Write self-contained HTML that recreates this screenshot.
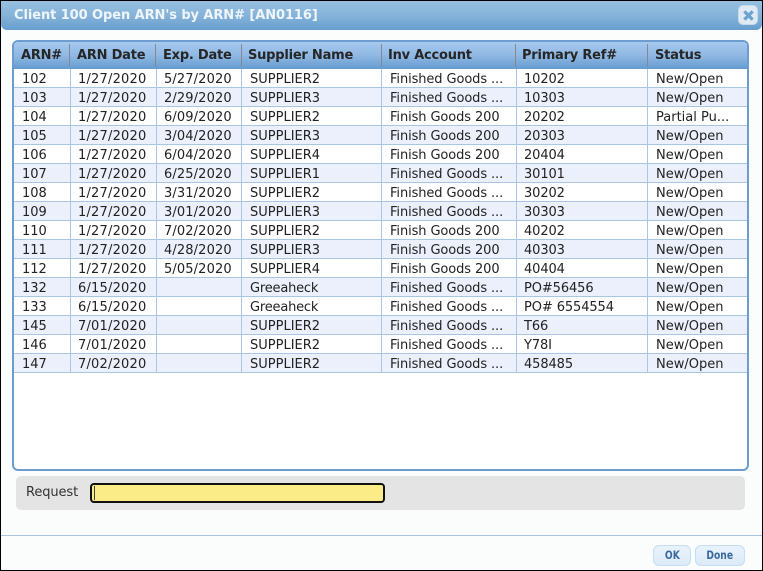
<!DOCTYPE html>
<html><head><meta charset="utf-8"><style>
html,body{margin:0;padding:0;width:763px;height:571px;overflow:hidden;background:#fbfdfd;font-family:"DejaVu Sans",sans-serif}
#w{position:absolute;left:0;top:0;width:763px;height:571px;overflow:hidden}
#bl{position:absolute;left:0;top:0;width:1px;height:571px;background:#000}
#bb{position:absolute;left:0;top:570px;width:763px;height:1px;background:#000}
#bt{position:absolute;left:0;top:0;width:763px;height:1px;background:#000}
#br{position:absolute;left:762px;top:0;width:1px;height:571px;background:#000}
#tb{position:absolute;left:1px;top:1px;width:761px;height:29px;background:linear-gradient(#96c0e0,#85b3d9 50%,#679ecd);border-radius:0 0 6px 6px}
#tt{position:absolute;left:14px;top:8px;color:#eef5fb;font-weight:bold;font-size:13px;letter-spacing:-.08px;line-height:16px;white-space:nowrap}
#x{position:absolute;left:738px;top:5px;width:20px;height:20px;border-radius:5px;background:#dfeaf5;border:1px solid #c4daec;box-sizing:border-box}
#g{position:absolute;left:12px;top:40px;width:737px;height:431px;box-sizing:border-box;border:2px solid #6b9dd0;border-radius:6px;background:#fff;overflow:hidden}
#h{position:absolute;left:0;top:0;width:733px;height:27px;background:linear-gradient(#a6c9ee,#8fb8e3 50%,#659bd0)}
.hc{position:absolute;top:6px;font-weight:bold;font-size:13px;letter-spacing:-.22px;line-height:16px;color:#262626;white-space:nowrap}
.hs{position:absolute;top:2px;width:1px;height:23px;background:#86888f}
.r{position:absolute;left:0;width:733px;height:19px;box-sizing:border-box;border-bottom:1px solid #a9c7e5;font-size:13px;line-height:18px;color:#222}
.r.a{background:#ebf0fc}
.r span{position:absolute;top:2px;white-space:nowrap}
.r span:nth-child(2){letter-spacing:.2px}
.r span:nth-child(3):not(.n){letter-spacing:.12px}
.r span.g{letter-spacing:-.2px}
.r span:nth-last-child(3){letter-spacing:-.1px}
.r span:nth-last-child(2){letter-spacing:-.1px}
.v{position:absolute;top:27px;width:1px;height:304px;background:#a9c7e5}
#rq{position:absolute;left:16px;top:476px;width:729px;height:34px;background:#e4e4e4;border-radius:5px}
#rl{position:absolute;left:26px;top:485px;font-size:13px;letter-spacing:-.1px;line-height:16px;color:#333}
#in{position:absolute;left:90px;top:483px;width:295px;height:20px;box-sizing:border-box;border:2px solid #111;border-radius:4px;background:#fbec88}
#car{position:absolute;left:94px;top:486px;width:1px;height:14px;background:#444}
#ln{position:absolute;left:1px;top:535px;width:761px;height:1px;background:#a9c5de}
.b{position:absolute;top:545px;height:21px;box-sizing:border-box;border:1px solid #c5ddf0;border-radius:6px;background:linear-gradient(#e9f3fc,#dcebf8);color:#3a6a9e;font-weight:bold;font-size:11.5px;line-height:19px;text-align:center}
.b span{display:inline-block;transform:scaleX(.8)}
</style></head><body><div id="w">
<div id="tb"></div><div id="bt"></div><div id="bl"></div><div id="br"></div><div id="bb"></div>
<div id="tt">Client 100 Open ARN's by ARN# [AN0116]</div>
<div id="x"><svg width="18" height="18" style="position:absolute;left:0;top:0"><path d="M6.5 6.5L12.5 12.5M12.5 6.5L6.5 12.5" stroke="#6ba2cf" stroke-width="3.2" stroke-linecap="square"/></svg></div>
<div id="g">
<div id="h">
<span class="hc" style="left:7px">ARN#</span>
<span class="hc" style="left:63px">ARN Date</span>
<span class="hc" style="left:149px">Exp. Date</span>
<span class="hc" style="left:234px">Supplier Name</span>
<span class="hc" style="left:374px">Inv Account</span>
<span class="hc" style="left:508px">Primary Ref#</span>
<span class="hc" style="left:641px">Status</span>
<i class="hs" style="left:55px"></i><i class="hs" style="left:141px"></i><i class="hs" style="left:227px"></i><i class="hs" style="left:367px"></i><i class="hs" style="left:501px"></i><i class="hs" style="left:633px"></i>
</div>
<div class="r" style="top:27px"><span style="left:8px">102</span><span style="left:64px">1/27/2020</span><span style="left:150px">5/27/2020</span><span style="left:236px">SUPPLIER2</span><span style="left:376px">Finished Goods ...</span><span style="left:510px">10202</span><span style="left:642px">New/Open</span></div>
<div class="r a" style="top:46px"><span style="left:8px">103</span><span style="left:64px">1/27/2020</span><span style="left:150px">2/29/2020</span><span style="left:236px">SUPPLIER3</span><span style="left:376px">Finished Goods ...</span><span style="left:510px">10303</span><span style="left:642px">New/Open</span></div>
<div class="r" style="top:65px"><span style="left:8px">104</span><span style="left:64px">1/27/2020</span><span style="left:150px">6/09/2020</span><span style="left:236px">SUPPLIER2</span><span style="left:376px">Finish Goods 200</span><span style="left:510px">20202</span><span style="left:642px">Partial Pu...</span></div>
<div class="r a" style="top:84px"><span style="left:8px">105</span><span style="left:64px">1/27/2020</span><span style="left:150px">3/04/2020</span><span style="left:236px">SUPPLIER3</span><span style="left:376px">Finish Goods 200</span><span style="left:510px">20303</span><span style="left:642px">New/Open</span></div>
<div class="r" style="top:103px"><span style="left:8px">106</span><span style="left:64px">1/27/2020</span><span style="left:150px">6/04/2020</span><span style="left:236px">SUPPLIER4</span><span style="left:376px">Finish Goods 200</span><span style="left:510px">20404</span><span style="left:642px">New/Open</span></div>
<div class="r a" style="top:122px"><span style="left:8px">107</span><span style="left:64px">1/27/2020</span><span style="left:150px">6/25/2020</span><span style="left:236px">SUPPLIER1</span><span style="left:376px">Finished Goods ...</span><span style="left:510px">30101</span><span style="left:642px">New/Open</span></div>
<div class="r" style="top:141px"><span style="left:8px">108</span><span style="left:64px">1/27/2020</span><span style="left:150px">3/31/2020</span><span style="left:236px">SUPPLIER2</span><span style="left:376px">Finished Goods ...</span><span style="left:510px">30202</span><span style="left:642px">New/Open</span></div>
<div class="r a" style="top:160px"><span style="left:8px">109</span><span style="left:64px">1/27/2020</span><span style="left:150px">3/01/2020</span><span style="left:236px">SUPPLIER3</span><span style="left:376px">Finished Goods ...</span><span style="left:510px">30303</span><span style="left:642px">New/Open</span></div>
<div class="r" style="top:179px"><span style="left:8px">110</span><span style="left:64px">1/27/2020</span><span style="left:150px">7/02/2020</span><span style="left:236px">SUPPLIER2</span><span style="left:376px">Finish Goods 200</span><span style="left:510px">40202</span><span style="left:642px">New/Open</span></div>
<div class="r a" style="top:198px"><span style="left:8px">111</span><span style="left:64px">1/27/2020</span><span style="left:150px">4/28/2020</span><span style="left:236px">SUPPLIER3</span><span style="left:376px">Finish Goods 200</span><span style="left:510px">40303</span><span style="left:642px">New/Open</span></div>
<div class="r" style="top:217px"><span style="left:8px">112</span><span style="left:64px">1/27/2020</span><span style="left:150px">5/05/2020</span><span style="left:236px">SUPPLIER4</span><span style="left:376px">Finish Goods 200</span><span style="left:510px">40404</span><span style="left:642px">New/Open</span></div>
<div class="r a" style="top:236px"><span style="left:8px">132</span><span style="left:64px">6/15/2020</span><span class="n g" style="left:236px">Greeaheck</span><span style="left:376px">Finished Goods ...</span><span style="left:510px">PO#56456</span><span style="left:642px">New/Open</span></div>
<div class="r" style="top:255px"><span style="left:8px">133</span><span style="left:64px">6/15/2020</span><span class="n g" style="left:236px">Greeaheck</span><span style="left:376px">Finished Goods ...</span><span style="left:510px">PO# 6554554</span><span style="left:642px">New/Open</span></div>
<div class="r a" style="top:274px"><span style="left:8px">145</span><span style="left:64px">7/01/2020</span><span class="n" style="left:236px">SUPPLIER2</span><span style="left:376px">Finished Goods ...</span><span style="left:510px">T66</span><span style="left:642px">New/Open</span></div>
<div class="r" style="top:293px"><span style="left:8px">146</span><span style="left:64px">7/01/2020</span><span class="n" style="left:236px">SUPPLIER2</span><span style="left:376px">Finished Goods ...</span><span style="left:510px">Y78I</span><span style="left:642px">New/Open</span></div>
<div class="r a" style="top:312px"><span style="left:8px">147</span><span style="left:64px">7/02/2020</span><span class="n" style="left:236px">SUPPLIER2</span><span style="left:376px">Finished Goods ...</span><span style="left:510px">458485</span><span style="left:642px">New/Open</span></div>
<i class="v" style="left:56px"></i><i class="v" style="left:142px"></i><i class="v" style="left:227px"></i><i class="v" style="left:367px"></i><i class="v" style="left:502px"></i><i class="v" style="left:633px"></i>
</div>
<div id="rq"></div>
<div id="rl">Request</div>
<div id="in"></div><div id="car"></div>
<div id="ln"></div>
<div class="b" style="left:653px;width:38px"><span>OK</span></div>
<div class="b" style="left:695px;width:50px"><span>Done</span></div>
</div></body></html>
